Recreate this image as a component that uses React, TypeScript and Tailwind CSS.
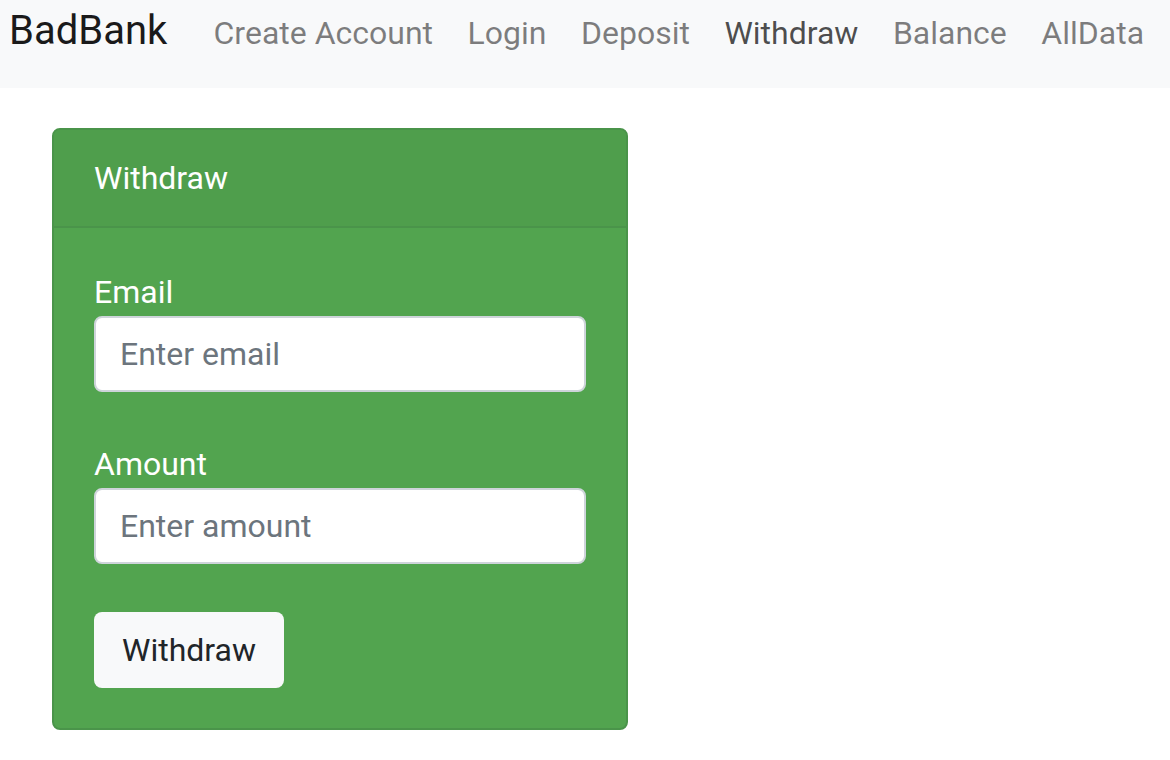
export default function App() {
  const links = ["Create Account", "Login", "Deposit", "Withdraw", "Balance", "AllData"];
  return (
    <div className="min-h-screen bg-white font-['Roboto','Liberation_Sans',sans-serif] text-[#212529]">
      {/* navbar */}
      <nav className="h-[88px] bg-[#f8f9fa] flex items-baseline pt-[7px] pl-[9px] whitespace-nowrap overflow-hidden">
        <span className="shrink-0 text-[40px] leading-[48px] text-[#1a1a1a] mr-[29px]">BadBank</span>
        {links.map((l) => (
          <span
            key={l}
            className={
              "shrink-0 text-[32px] leading-[48px] px-[17.25px] " +
              (l === "Withdraw" ? "text-black/70" : "text-black/50")
            }
          >
            {l}
          </span>
        ))}
      </nav>

      {/* withdraw card */}
      <div className="mt-[40px] ml-[52px] w-[576px] bg-[#52a44f] border-2 border-[#4a944a] rounded-[8px] text-white overflow-hidden">
        <div className="bg-[#4f9e4c] border-b-2 border-[#4a944a] px-[40px] py-[24px] text-[32px] leading-[48px]">
          Withdraw
        </div>
        <div className="p-[40px] text-[32px] leading-[48px]">
          <label className="block">Email</label>
          <input
            placeholder="Enter email"
            className="block w-full h-[76px] bg-white border-2 border-[#ced4da] rounded-[8px] px-[24px] text-[32px] text-[#495057] placeholder:text-[#6c757d] outline-none"
          />
          <div className="h-[48px]" />
          <label className="block">Amount</label>
          <input
            placeholder="Enter amount"
            className="block w-full h-[76px] bg-white border-2 border-[#ced4da] rounded-[8px] px-[24px] text-[32px] text-[#495057] placeholder:text-[#6c757d] outline-none"
          />
          <div className="h-[48px]" />
          <button className="h-[76px] px-[28px] bg-[#f8f9fa] text-[#212529] rounded-[8px] text-[32px] leading-[48px]">
            Withdraw
          </button>
        </div>
      </div>
    </div>
  );
}
